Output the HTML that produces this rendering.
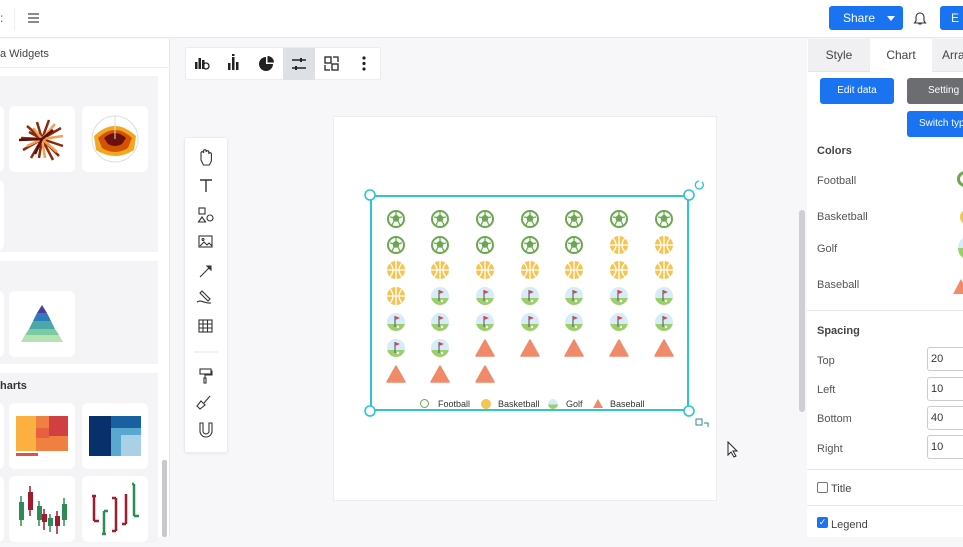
<!DOCTYPE html>
<html><head><meta charset="utf-8">
<style>
*{box-sizing:border-box;margin:0;padding:0}
body{width:963px;height:537px;overflow:hidden;position:relative;font-family:"Liberation Sans",sans-serif;background:#f7f7f9;color:#333}
.abs{position:absolute}
.top{left:0;top:0;width:963px;height:38px;background:#fff;border-bottom:1px solid #e8e8ec}
.btn{position:absolute;background:#1a73f0;color:#fff;border-radius:3px;font-size:12px;text-align:center}
.left{left:0;top:39px;width:170px;height:498px;background:#fff;border-right:1px solid #e6e6ea}
.card{position:absolute;left:0;width:158px;background:#f4f4f7}
.tile{position:absolute;width:66px;height:66px;background:#fff;border-radius:6px}
.ic{position:absolute}
.right{left:807px;top:39px;width:156px;height:498px;background:#fff}
.lbl{position:absolute;font-size:11px;color:#555;left:10px}
.inp{position:absolute;left:120px;width:40px;height:24px;border:1px solid #ccc;border-radius:3px;font-size:11px;padding:5px 3px;color:#333}
.sep{position:absolute;left:0;width:156px;height:1px;background:#e8e8ec}
</style></head><body>
<div class="abs top">
  <div class="abs" style="left:0;top:11px;width:3px;height:14px;color:#555;font-size:12px">:</div>
  <div class="abs" style="left:14px;top:8px;width:1px;height:22px;background:#eee"></div>
  <svg class="abs" style="left:28px;top:13px" width="11" height="10"><path d="M0 1h11M0 5h11M0 9h11" stroke="#444" stroke-width="1.3"/></svg>
  <div class="btn" style="left:829px;top:6px;width:74px;height:24px;line-height:24px;padding-right:14px">Share</div>
  <svg class="abs" style="left:887px;top:16px" width="8" height="5"><path d="M0 0h8L4 5z" fill="#fff"/></svg>
  <svg class="abs" style="left:913px;top:10px" width="14" height="16"><path d="M3 11V7a4 4 0 0 1 8 0v4l1.5 2h-11z M5.5 14h3" fill="none" stroke="#333" stroke-width="1.1"/></svg>
  <div class="btn" style="left:940px;top:6px;width:30px;height:24px;line-height:24px">E</div>
</div>

<div class="abs left">
  <div class="abs" style="left:0;top:0;width:170px;height:29px;border-bottom:1px solid #eee;font-size:11px;color:#444;padding:9px 0 0 0">a Widgets</div>
  <div class="card" style="top:37px;height:176px">
    <div class="tile" style="left:-62px;top:30px"></div>
    <div class="tile" style="left:9px;top:30px">
      <svg width="66" height="66"><g stroke-width="2.5">
      <path d="M33 33L14 44M33 33L18 20M33 33L44 54M33 33L52 22M33 33L22 52M33 33L28 16M33 33L54 40M33 33L12 32M33 33L40 14M33 33L50 50M33 33L30 52M33 33L20 26" stroke="#8a2a10"/>
      <path d="M33 33L18 40M33 33L46 18M33 33L54 30M33 33L36 52M33 33L24 22M33 33L48 46" stroke="#f0a050"/>
      <path d="M33 33L10 34M33 33L26 48M33 33L44 24" stroke="#5a0d0d"/></g></svg>
    </div>
    <div class="tile" style="left:82px;top:30px">
      <svg width="66" height="66"><circle cx="33" cy="33" r="23" fill="none" stroke="#ddd"/>
      <path d="M12 30 Q33 10 54 30 L52 44 Q33 56 14 44z" fill="#f3a623"/><path d="M16 32 Q33 16 50 32 L46 42 Q33 50 20 42z" fill="#d35400"/><path d="M22 32 Q33 22 44 32 L40 38 Q33 42 26 38z" fill="#6b0f0f"/><path d="M33 10V33" stroke="#ddd"/></svg>
    </div>
    <div class="tile" style="left:-62px;top:104px;height:70px"></div>
  </div>
  <div class="card" style="top:222px;height:103px">
    <div class="tile" style="left:-62px;top:30px"></div>
    <div class="tile" style="left:9px;top:30px">
      <svg width="66" height="66"><path d="M33 14L28 22H38z" fill="#4a3f9a"/><path d="M28 22H38L42 30H24z" fill="#2f7bbf"/><path d="M24 30H42L46 38H20z" fill="#4aa8a8"/><path d="M20 38H46L50 44H16z" fill="#7cc9a2"/><path d="M16 44H50L54 51H12z" fill="#b5e3b0"/></svg>
    </div>
  </div>
  <div class="card" style="top:334px;height:170px">
    <div class="abs" style="left:0;top:7px;font-size:11px;font-weight:bold;color:#333">harts</div>
    <div class="tile" style="left:-62px;top:30px"></div>
    <div class="tile" style="left:9px;top:30px">
      <svg width="66" height="66"><rect x="7" y="13" width="52" height="35" fill="#f08040"/><rect x="7" y="13" width="20" height="35" fill="#fbb040"/><rect x="40" y="13" width="19" height="20" fill="#d04040"/><rect x="27" y="25" width="13" height="10" fill="#e86040"/><rect x="7" y="50" width="22" height="3" fill="#e05050"/></svg>
    </div>
    <div class="tile" style="left:82px;top:30px">
      <svg width="66" height="66"><rect x="7" y="13" width="52" height="40" fill="#5aa8d0"/><rect x="7" y="13" width="22" height="40" fill="#08306b"/><rect x="29" y="13" width="30" height="12" fill="#1860a0"/><rect x="39" y="32" width="20" height="21" fill="#a8d0e6"/></svg>
    </div>
    <div class="tile" style="left:-62px;top:103px"></div>
    <div class="tile" style="left:9px;top:103px">
      <svg width="66" height="66"><g stroke-width="1.5"><path d="M12 20V50M30 25V50M41 38V56M55 22V50" stroke="#2e8b57"/><path d="M21 10V40M35 33V54M48 35V58" stroke="#a01c2c"/></g><rect x="10" y="26" width="5" height="18" fill="#2e8b57"/><rect x="19" y="16" width="5" height="18" fill="#a01c2c"/><rect x="28" y="30" width="5" height="14" fill="#2e8b57"/><rect x="33" y="38" width="5" height="8" fill="#a01c2c"/><rect x="39" y="42" width="5" height="8" fill="#2e8b57"/><rect x="46" y="40" width="5" height="10" fill="#a01c2c"/><rect x="53" y="28" width="5" height="16" fill="#2e8b57"/></svg>
    </div>
    <div class="tile" style="left:82px;top:103px">
      <svg width="66" height="66" fill="none" stroke-width="2.5"><path d="M12 20V45M10 20h4M12 45h5" stroke="#a01c2c"/><path d="M22 35V58M20 58h4M22 35h4" stroke="#2e8b57"/><path d="M34 22V55M30 22h4M30 55h4" stroke="#a01c2c"/><path d="M44 18V48M40 48h4" stroke="#a01c2c"/><path d="M52 8V40M52 40h5M50 8h2" stroke="#2e8b57"/></svg>
    </div>
  </div>
  <div class="abs" style="left:162px;top:421px;width:5px;height:77px;background:#c8c8cc;border-radius:2px"></div>
</div>

<!-- top toolbar -->
<div class="abs" style="left:185px;top:47px;width:196px;height:33px;background:#fff;border:1px solid #ececf0;border-radius:2px"></div>
<div class="abs" style="left:283px;top:48px;width:32px;height:32px;background:#dde0e5"></div>
<svg class="abs" style="left:185px;top:47px" width="196" height="33">
  <g fill="#222">
    <rect x="10" y="15" width="2.5" height="7"/><rect x="13.5" y="11" width="2.5" height="11"/><rect x="17" y="13" width="2.5" height="9"/><circle cx="21" cy="19" r="3" fill="none" stroke="#222" stroke-width="1.3"/>
    <rect x="43" y="16" width="2.5" height="7"/><rect x="47" y="10" width="2.5" height="13"/><rect x="51" y="15" width="2.5" height="8"/><rect x="47" y="7" width="2.5" height="2"/>
    <path d="M81 10a7 7 0 1 0 7 7h-7z"/><path d="M82.5 9v6.5h6.5a6.5 6.5 0 0 0 -6.5 -6.5z"/>
    <path d="M107 13h14M107 21h14" stroke="#222" stroke-width="1.4"/><rect x="115" y="11" width="2" height="4"/><rect x="110" y="19" width="2" height="4"/>
    <rect x="140" y="10" width="6" height="6" fill="none" stroke="#222" stroke-width="1.3"/><rect x="147" y="17" width="6" height="6" fill="none" stroke="#222" stroke-width="1.3"/><path d="M148 10h5v5M140 18v5h5" fill="none" stroke="#222" stroke-width="1.3"/>
    <circle cx="179" cy="11" r="1.6"/><circle cx="179" cy="16.5" r="1.6"/><circle cx="179" cy="22" r="1.6"/>
  </g>
</svg>

<!-- vertical toolbar -->
<div class="abs" style="left:184px;top:137px;width:44px;height:316px;background:#fff;border:1px solid #ececf0;border-radius:3px;box-shadow:0 1px 2px rgba(0,0,0,.06)"></div>
<svg class="abs" style="left:184px;top:137px" width="44" height="316" fill="none" stroke="#333" stroke-width="1.1">
  <path d="M17 23v-7a1.3 1.3 0 0 1 2.6 0v-2a1.3 1.3 0 0 1 2.6 0v1a1.3 1.3 0 0 1 2.6 0v2a1.3 1.3 0 0 1 2.6 0v7l-2 4h-6z"/>
  <path d="M16 43h12M22 43v12" stroke-width="1.4"/>
  <rect x="15" y="71" width="6" height="6"/><path d="M18 80l-3.5 5h7z"/><circle cx="26" cy="81" r="3"/>
  <rect x="15" y="99" width="13" height="11"/><path d="M16 109l4-4 3 3 2-2 3 3"/><circle cx="19" cy="102.5" r="1"/>
  <path d="M16 140l9-9"/><path d="M23 129l4 0 0 4z" fill="#333"/>
  <path d="M18 154l8 8-2 2-8-8z M13 165c4-3 8 2 14 1"/>
  <rect x="15" y="183" width="13" height="12"/><path d="M15 187h13M15 191h13M19 183v12M23.5 183v12"/>
  <path d="M10 215h24" stroke="#e4e4e8"/>
  <rect x="16" y="232" width="11" height="5"/><path d="M27 234h1v4h-7v3"/><rect x="20" y="241" width="2" height="5"/>
  <path d="M26 259l-6 7 M17 264l4 4 -5 4 -3 -3z"/>
  <path d="M16 286v8a6 6 0 0 0 12 0v-8h-3v8a3 3 0 0 1 -6 0v-8z"/>
</svg>

<!-- page -->
<div class="abs" style="left:333px;top:116px;width:384px;height:385px;background:#fff;border:1px solid #ececf0"></div>
<div class="abs" style="left:370px;top:195px;width:319px;height:216px;border:2px solid #2ec4d0"></div>
<svg class="abs" style="left:360px;top:175px" width="360" height="265">
  <g fill="#fff" stroke="#2ec4d0" stroke-width="1.6"><circle cx="10" cy="20" r="5"/><circle cx="329" cy="20" r="5"/><circle cx="10" cy="236" r="5"/><circle cx="329" cy="236" r="5"/></g>
  <path d="M342 7a4 4 0 1 1 -3 -1" fill="none" stroke="#2ec4d0" stroke-width="1.3"/>
  <path d="M336 244h6v6h-6z M344 248h4v4" fill="none" stroke="#2a8a8a" stroke-width="1"/>
</svg>
<svg class="abs" style="left:727px;top:441px" width="12" height="17"><path d="M1 1v13l3-3 3 5 2-1-3-5h4z" fill="#fff" stroke="#222"/></svg>

<div id="grid"></div>
<div class="abs" style="left:420px;top:398px;font-size:9px;color:#333;white-space:nowrap">
  <span style="position:absolute;left:0;top:1px;width:9px;height:9px;border-radius:50%;border:1.5px solid #6aa84f"></span>
  <span style="position:absolute;left:18px;top:1px">Football</span>
  <span style="position:absolute;left:61px;top:1px;width:10px;height:10px;border-radius:50%;background:#f5c452"></span>
  <span style="position:absolute;left:78px;top:1px">Basketball</span>
  <span style="position:absolute;left:128px;top:1px;width:10px;height:10px;border-radius:50%;background:linear-gradient(#d6ecf8 55%,#9ccf6c 55%)"></span>
  <span style="position:absolute;left:146px;top:1px">Golf</span>
  <span style="position:absolute;left:173px;top:1px;width:0;height:0;border-left:5px solid transparent;border-right:5px solid transparent;border-bottom:9px solid #f08a6a"></span>
  <span style="position:absolute;left:190px;top:1px">Baseball</span>
</div>

<!-- right panel -->
<div class="abs" style="left:799px;top:210px;width:6px;height:202px;background:#cfcfd3;border-radius:3px"></div>
<div class="abs right">
  <div class="abs" style="left:1px;top:0;width:62px;height:33px;background:#f0f0f2;font-size:12px;color:#444;text-align:center;line-height:33px;border-bottom:1px solid #e4e4e8">Style</div>
  <div class="abs" style="left:63px;top:0;width:62px;height:33px;background:#fff;font-size:12px;color:#444;text-align:center;line-height:33px">Chart</div>
  <div class="abs" style="left:125px;top:0;width:40px;height:33px;background:#f0f0f2;font-size:12px;color:#444;line-height:33px;padding-left:10px;border-bottom:1px solid #e4e4e8">Arra</div>
  <div class="btn" style="left:13px;top:39px;width:74px;height:26px;line-height:26px;font-size:10px">Edit data</div>
  <div class="btn" style="left:100px;top:39px;width:70px;height:26px;line-height:26px;font-size:10px;background:#6b6d71;text-align:left;padding-left:21px">Setting</div>
  <div class="btn" style="left:100px;top:72px;width:70px;height:26px;line-height:26px;font-size:10px;text-align:left;padding-left:12px">Switch typ</div>
  <div class="lbl" style="top:106px;font-weight:bold;color:#444">Colors</div>
  <div class="lbl" style="top:136px">Football</div>
  <div class="lbl" style="top:172px">Basketball</div>
  <div class="lbl" style="top:204px">Golf</div>
  <div class="lbl" style="top:240px">Baseball</div>
  <div class="abs" style="left:150px;top:132px;width:16px;height:16px;border-radius:50%;border:3px solid #6aa84f"></div>
  <div class="abs" style="left:153px;top:170px;width:16px;height:16px;border-radius:50%;background:#f5c452"></div>
  <div class="abs" style="left:151px;top:198px;width:18px;height:22px;border-radius:50%;background:linear-gradient(#d6ecf8 50%,#9ccf6c 50%)"></div>
  <div class="abs" style="left:146px;top:240px;width:0;height:0;border-left:8px solid transparent;border-right:8px solid transparent;border-bottom:15px solid #f08a6a"></div>
  <div class="sep" style="top:271px"></div>
  <div class="lbl" style="top:286px;font-weight:bold;color:#444">Spacing</div>
  <div class="lbl" style="top:316px">Top</div><div class="inp" style="top:308px">20</div>
  <div class="lbl" style="top:345px">Left</div><div class="inp" style="top:338px">10</div>
  <div class="lbl" style="top:374px">Bottom</div><div class="inp" style="top:367px">40</div>
  <div class="lbl" style="top:404px">Right</div><div class="inp" style="top:396px">10</div>
  <div class="sep" style="top:430px"></div>
  <div class="abs" style="left:10px;top:443px;width:11px;height:11px;border:1px solid #777;border-radius:2px"></div>
  <div class="lbl" style="top:444px;left:24px;color:#444">Title</div>
  <div class="sep" style="top:466px"></div>
  <div class="abs" style="left:10px;top:478px;width:11px;height:11px;background:#1a73f0;border-radius:2px;color:#fff;font-size:9px;line-height:11px;text-align:center">✓</div>
  <div class="lbl" style="top:480px;left:24px;color:#444">Legend</div>
</div>

<script>
var seq=[];for(var i=0;i<12;i++)seq.push('f');for(i=0;i<10;i++)seq.push('b');for(i=0;i<15;i++)seq.push('g');for(i=0;i<8;i++)seq.push('s');
var xs=[396,440,485,530,574,619,664],ys=[219,245,270,296,322,348,374],h='';
seq.forEach(function(t,k){var x=xs[k%7]-10,y=ys[Math.floor(k/7)]-10,s;
if(t=='f')s='<circle cx="10" cy="10" r="8" fill="#fff" stroke="#6aa84f" stroke-width="2"/><path d="M10 6l3 2.5-1 3.5h-4l-1-3.5z M10 3v3M16 8l-3 .5M4 8l3 .5M6 16l2-4M14 16l-2-4" fill="#6aa84f" stroke="#6aa84f" stroke-width="1.2"/>';
else if(t=='b')s='<circle cx="10" cy="10" r="9" fill="#f5c452"/><path d="M1 10h18M10 1v18M4 3q6 7 0 14M16 3q-6 7 0 14" stroke="#fff" stroke-width="1.3" fill="none"/>';
else if(t=='g')s='<clipPath id="c'+k+'"><circle cx="10" cy="10" r="9"/></clipPath><g clip-path="url(#c'+k+')"><rect width="20" height="12" fill="#d6ecf8"/><rect y="12" width="20" height="8" fill="#9ccf6c"/></g><path d="M9 4v11" stroke="#666" stroke-width="1.2"/><path d="M9 4l5 2-5 2z" fill="#e04050"/><circle cx="12" cy="15" r="1.2" fill="#fff"/>';
else s='<path d="M10 2L19 18H1z" fill="#f08a6a" stroke="#f08a6a" stroke-linejoin="round" stroke-width="1.5"/>';
h+='<svg class="ic" style="left:'+x+'px;top:'+y+'px" width="20" height="20">'+s+'</svg>';});
document.getElementById('grid').innerHTML=h;
</script>
</body></html>
